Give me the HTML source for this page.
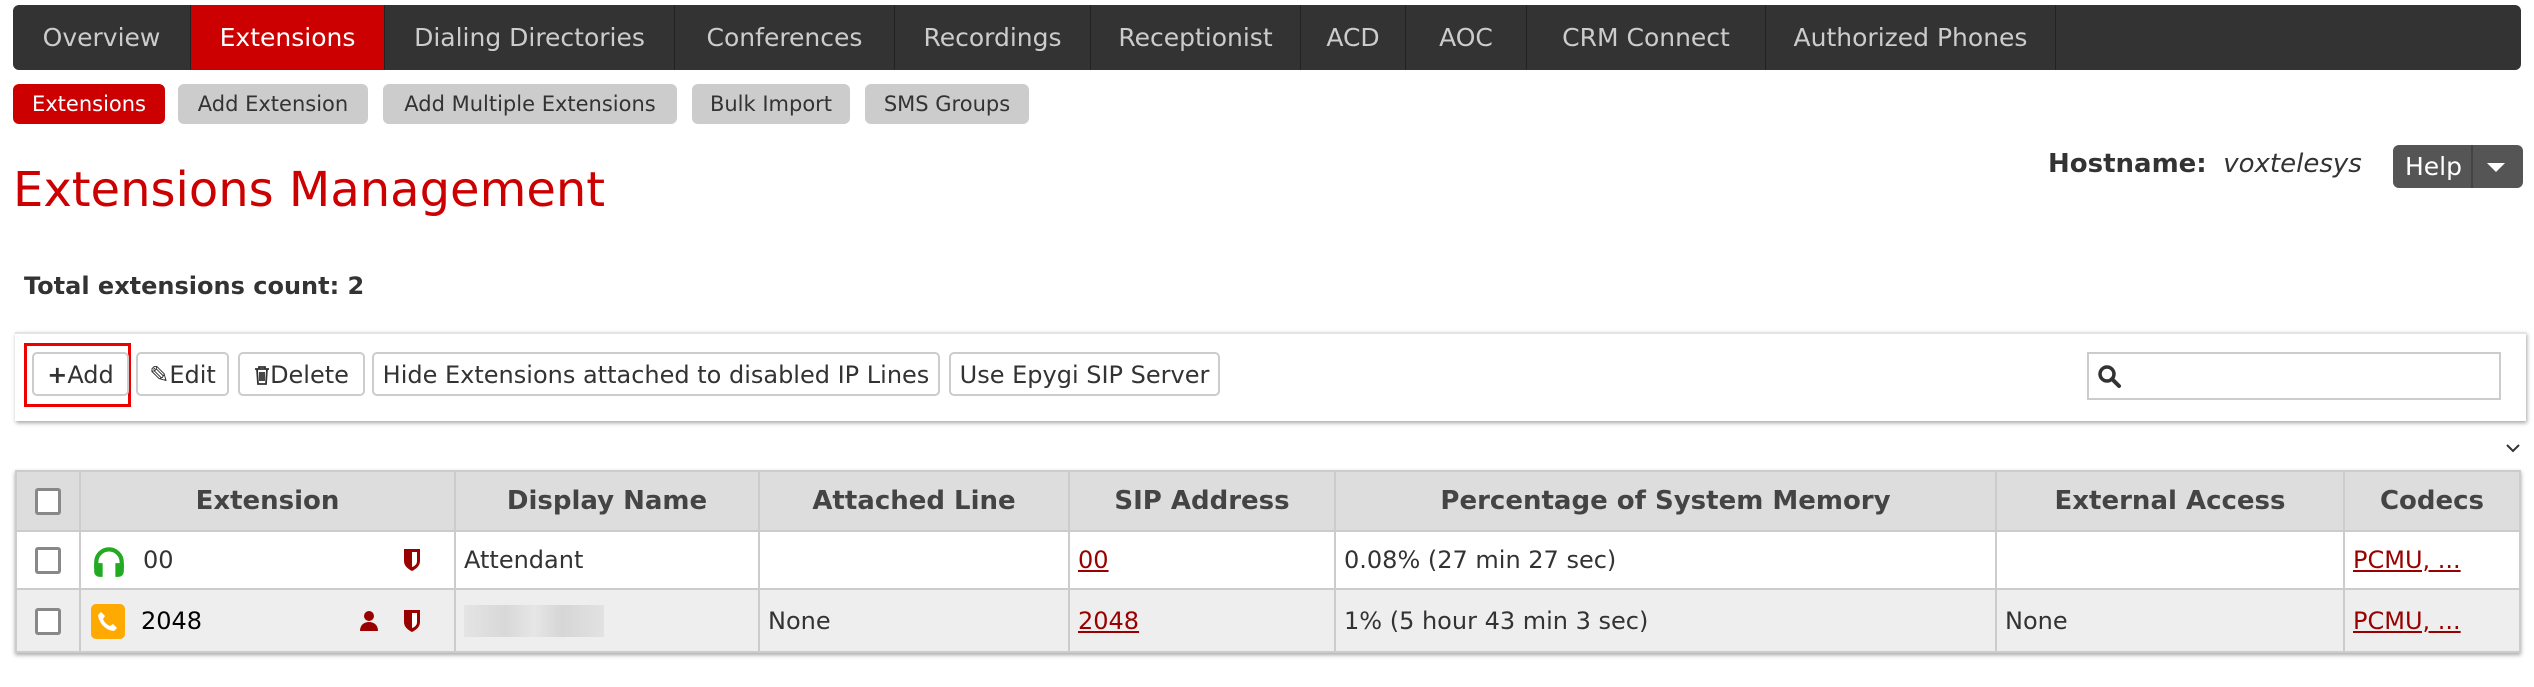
<!DOCTYPE html>
<html><head><meta charset="utf-8"><style>
*{box-sizing:border-box;margin:0;padding:0}
body{width:2534px;height:687px;background:#fff;font-family:"DejaVu Sans","Liberation Sans",sans-serif;color:#333;position:relative;overflow:hidden}
.abs{position:absolute}
.nav{left:13px;top:5px;width:2508px;height:65px;background:#333;border-radius:6px;overflow:hidden}
.nav div{position:absolute;top:0;height:65px;line-height:65px;text-align:center;color:#ccc;font-size:25px;border-right:1px solid #222}
.nav .on{background:#c00;color:#fff}
.sb{top:84px;height:40px;line-height:40px;background:#ccc;border-radius:6px;font-size:21px;text-align:center;color:#333}
.sb.on{background:#c00;color:#fff}
.btn{top:352px;height:44px;line-height:42px;border:2px solid #ccc;border-radius:5px;font-size:24px;text-align:center;color:#333;background:#fff}
table{position:absolute;left:15px;top:470px;width:2506px;border-collapse:collapse;box-shadow:0 2px 4px rgba(0,0,0,.35);font-size:24px}
td,th{border:2px solid #ccc;padding:0 8px;white-space:nowrap}
th{background:#ddd;height:60px;font-size:26px;color:#444}
tr.r1 td{height:58px;background:#fff}
tr.r2 td{height:63px;background:#eee}
a{color:#900;text-decoration:underline}
.cb{display:inline-block;width:26px;height:27px;border:3px solid #888;border-radius:3px;background:#fff;vertical-align:middle}
.ext{position:relative;display:block;width:355px;height:40px;line-height:40px}
</style></head><body>
<div class="abs nav">
<div style="left:0;width:178px">Overview</div>
<div class="on" style="left:178px;width:194px">Extensions</div>
<div style="left:372px;width:290px">Dialing Directories</div>
<div style="left:662px;width:220px">Conferences</div>
<div style="left:882px;width:196px">Recordings</div>
<div style="left:1078px;width:210px">Receptionist</div>
<div style="left:1288px;width:105px">ACD</div>
<div style="left:1393px;width:121px">AOC</div>
<div style="left:1514px;width:239px">CRM Connect</div>
<div style="left:1753px;width:290px">Authorized Phones</div>
</div>
<div class="abs sb on" style="left:13px;width:152px">Extensions</div>
<div class="abs sb" style="left:178px;width:190px">Add Extension</div>
<div class="abs sb" style="left:383px;width:294px">Add Multiple Extensions</div>
<div class="abs sb" style="left:692px;width:158px">Bulk Import</div>
<div class="abs sb" style="left:865px;width:164px">SMS Groups</div>
<div class="abs" style="left:13px;top:155px;font-size:48px;color:#c00;line-height:70px">Extensions Management</div>
<div class="abs" style="left:2048px;top:146px;font-size:26px;line-height:36px"><b>Hostname:</b>&nbsp; <i>voxtelesys</i></div>
<div class="abs" style="left:2393px;top:145px;width:130px;height:43px;background:#555;border-radius:6px;color:#fff;font-size:25px;line-height:43px"><span style="position:absolute;left:12px">Help</span><span style="position:absolute;left:78px;top:0;width:2px;height:43px;background:#444"></span><span style="position:absolute;left:94px;top:18px;border-left:9px solid transparent;border-right:9px solid transparent;border-top:9px solid #fff"></span></div>
<div class="abs" style="left:24px;top:270px;font-size:24px;font-weight:bold;line-height:32px">Total extensions count: 2</div>
<div class="abs" style="left:15px;top:332px;width:2511px;height:89px;border-top:2px solid #e4e4e4;box-shadow:1px 2px 4px rgba(0,0,0,.35)"></div>
<div class="abs" style="left:24px;top:343px;width:107px;height:64px;border:3px solid #e00"></div>
<div class="abs btn" style="left:32px;width:97px"><b>+</b>Add</div>
<div class="abs btn" style="left:136px;width:93px">✎Edit</div>
<div class="abs btn" style="left:238px;width:127px"><svg width="16" height="20" viewBox="0 0 16 20" style="vertical-align:-2px"><path d="M1 4h14M5 4V2h6v2M3 4l1 15h8l1-15M6 7v9M8 7v9M10 7v9" stroke="#333" stroke-width="1.8" fill="none"/></svg>Delete</div>
<div class="abs btn" style="left:372px;width:568px">Hide Extensions attached to disabled IP Lines</div>
<div class="abs btn" style="left:949px;width:271px">Use Epygi SIP Server</div>
<div class="abs" style="left:2087px;top:352px;width:414px;height:48px;border:2px solid #ccc"><svg width="26" height="26" viewBox="0 0 26 26" style="position:absolute;left:8px;top:10px"><circle cx="10" cy="10" r="7" stroke="#333" stroke-width="3.5" fill="none"/><path d="M15 15l7 7" stroke="#333" stroke-width="4" stroke-linecap="round"/></svg></div>
<svg class="abs" style="left:2505px;top:443px" width="16" height="10" viewBox="0 0 16 10"><path d="M2 2l6 6 6-6" stroke="#333" stroke-width="2" fill="none"/></svg>
<table>
<tr><th style="width:64px"><span class="cb"></span></th><th style="width:375px">Extension</th><th style="width:304px">Display Name</th><th style="width:310px">Attached Line</th><th style="width:266px">SIP Address</th><th style="width:661px">Percentage of System Memory</th><th style="width:348px">External Access</th><th>Codecs</th></tr>
<tr class="r1"><td style="text-align:center"><span class="cb"></span></td><td><div class="ext"><svg width="36" height="36" viewBox="0 0 34 34" style="vertical-align:middle;margin-left:2px"><path d="M5 24V18a12 12 0 0 1 24 0v6" stroke="#2a2" stroke-width="4" fill="none"/><path d="M3 19h8v13H8a5 5 0 0 1-5-5zM31 19h-8v13h3a5 5 0 0 0 5-5z" fill="#2a2"/></svg><span style="margin-left:16px">00</span><svg width="18" height="24" viewBox="0 0 18 24" style="position:absolute;left:314px;top:8px"><path d="M1 1h16v12c0 5-4 8-8 10C5 21 1 18 1 13z" fill="#900"/><path d="M9 4h5v9c0 3-2 5-5 6z" fill="#fff"/></svg></div></td><td>Attendant</td><td></td><td><a>00</a></td><td>0.08% (27 min 27 sec)</td><td></td><td><a>PCMU, ...</a></td></tr>
<tr class="r2"><td style="text-align:center"><span class="cb"></span></td><td><div class="ext"><span style="display:inline-block;vertical-align:middle;width:34px;height:35px;background:#fa0;border-radius:5px;margin-left:2px;position:relative"><svg width="24" height="24" viewBox="0 0 24 24" style="position:absolute;left:5px;top:6px"><path d="M5 2l4 4-2 3c1 3 4 6 7 7l3-2 4 4-3 3C9 20 3 13 2 5z" fill="#fff"/></svg></span><span style="margin-left:16px;color:#000">2048</span><svg width="20" height="22" viewBox="0 0 20 22" style="position:absolute;left:270px;top:9px"><circle cx="10" cy="6" r="5" fill="#900"/><path d="M1 21c0-6 4-9 9-9s9 3 9 9z" fill="#900"/></svg><svg width="18" height="24" viewBox="0 0 18 24" style="position:absolute;left:314px;top:8px"><path d="M1 1h16v12c0 5-4 8-8 10C5 21 1 18 1 13z" fill="#900"/><path d="M9 4h5v9c0 3-2 5-5 6z" fill="#fff"/></svg></div></td><td><span style="display:inline-block;width:140px;height:32px;vertical-align:middle;background:linear-gradient(90deg,#e4e4e4,#d8d8d8 30%,#e6e6e6 50%,#d6d6d6 70%,#e2e2e2)"></span></td><td>None</td><td><a>2048</a></td><td>1% (5 hour 43 min 3 sec)</td><td>None</td><td><a>PCMU, ...</a></td></tr>
</table>
</body></html>
